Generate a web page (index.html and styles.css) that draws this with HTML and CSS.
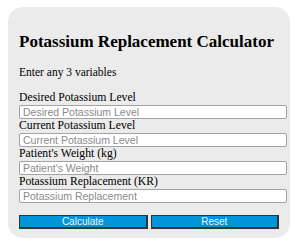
FILE: index.html
```html
<!DOCTYPE html>
<html>
<head>
<meta charset="utf-8">
<link rel="stylesheet" href="styles.css">
</head>
<body>
<div class="calc">
  <h2 class="title">Potassium Replacement Calculator</h2>
  <p class="hint">Enter any 3 variables</p>
  <div class="fields">
    <label class="lbl">Desired Potassium Level</label>
    <input class="inp" type="text" placeholder="Desired Potassium Level">
    <label class="lbl">Current Potassium Level</label>
    <input class="inp" type="text" placeholder="Current Potassium Level">
    <label class="lbl">Patient's Weight (kg)</label>
    <input class="inp" type="text" placeholder="Patient's Weight">
    <label class="lbl">Potassium Replacement (KR)</label>
    <input class="inp" type="text" placeholder="Potassium Replacement">
  </div>
  <div class="btns">
    <button class="btn">Calculate</button>
    <button class="btn">Reset</button>
  </div>
</div>
</body>
</html>
```
FILE: styles.css
```css
html, body { margin: 0; padding: 0; background: #fff; }
body { padding: 7px 8px; font-family: "Liberation Serif", "Times New Roman", serif; color: #000; }
.calc {
  width: 260px;
  padding: 13px 11px 9px;
  background: #ebebeb;
  border-radius: 15px;
}
.title {
  margin: 12px 0 0;
  font-size: 17px;
  line-height: 20px;
  font-weight: bold;
}
.hint {
  margin: 13px 0 0;
  font-size: 11.5px;
  line-height: 14px;
}
.fields { margin-top: 12px; display: flex; flex-direction: column; }
.lbl { display: block; font-size: 11.7px; line-height: 14px; }
.inp {
  display: block;
  width: 100%;
  height: 12px;
  margin: 0;
  padding: 0 3px;
  border: 1px solid #a3a3a3;
  border-radius: 2px;
  background: #fff;
  font-family: "Liberation Sans", Arial, sans-serif;
  font-size: 10.5px;
  box-sizing: content-box;
}
.inp::placeholder { color: #8a8a8a; }
.btns { display: flex; gap: 3px; margin-top: 12px; }
.btn {
  flex: 1;
  height: 14px;
  padding: 0;
  background: #0095da;
  border: 1px solid #333;
  border-right-width: 2px;
  border-bottom-width: 2px;
  color: #eef6ff;
  font-family: "Liberation Sans", Arial, sans-serif;
  font-size: 10px;
  line-height: 10px;
}
```
